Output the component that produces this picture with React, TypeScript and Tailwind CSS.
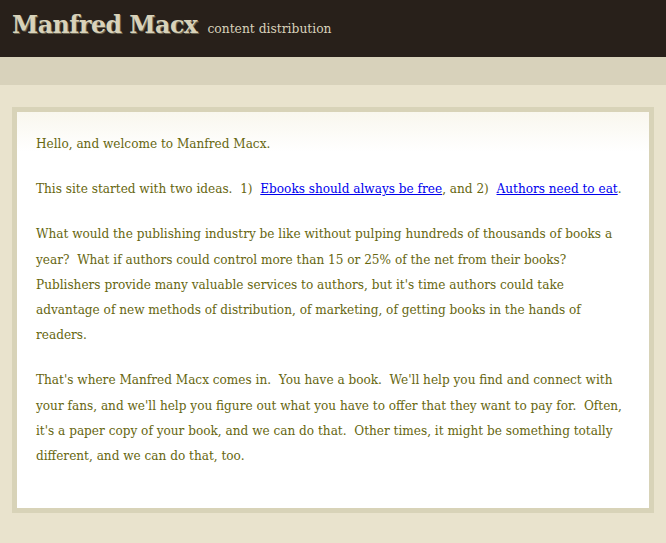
import React from "react";

const serif = "font-['Georgia','DejaVu_Serif',serif]";

export default function App() {
  return (
    <div className={`min-h-[543px] bg-[#e9e3cd] ${serif}`}>
      {/* Header */}
      <header className="h-[57px] bg-[#28201a] flex items-end px-3 pb-[19px]">
        <h1 className="text-[23.7px] leading-none font-bold text-[#d8d2ba] tracking-[-0.5px] [text-shadow:1px_1px_0_#6b6350]">
          Manfred Macx
        </h1>
        <span className="ml-[10px] text-[12.3px] leading-none text-[#d8d2ba] mb-[3px]">
          content distribution
        </span>
      </header>
      <div className="h-[28px] bg-[#d8d2bb]" />

      {/* Content box */}
      <div className="pt-[22px] px-3 pb-[31px]">
        <div className="border-[5px] border-[#d8d3b8] bg-gradient-to-b from-[#f9f7ee] to-white to-[40px] bg-white">
          <div className="pl-[19px] pr-[24px] pt-[20px] pb-[19px] text-[12.1px] leading-[25.2px] text-[#66660f]">
            <p className="mb-5">Hello, and welcome to Manfred Macx.</p>
            <p className="mb-5">
              This site started with two ideas.&nbsp; 1)&nbsp;{" "}
              <a href="#" className="text-[#0000ee] underline">
                Ebooks should always be free
              </a>
              , and 2)&nbsp;{" "}
              <a href="#" className="text-[#0000ee] underline">
                Authors need to eat
              </a>
              .
            </p>
            <p className="mb-5">
              What would the publishing industry be like without pulping hundreds of thousands of books a
              year?&nbsp; What if authors could control more than 15 or 25% of the net from their books?&nbsp;
              Publishers provide many valuable services to authors, but it's time authors could take
              advantage of new methods of distribution, of marketing, of getting books in the hands of
              readers.
            </p>
            <p className="mb-5">
              That's where Manfred Macx comes in.&nbsp; You have a book.&nbsp; We'll help you find and connect with
              your fans, and we'll help you figure out what you have to offer that they want to pay for.&nbsp; Often,
              it's a paper copy of your book, and we can do that.&nbsp; Other times, it might be something totally
              different, and we can do that, too.
            </p>
          </div>
        </div>
      </div>
    </div>
  );
}
